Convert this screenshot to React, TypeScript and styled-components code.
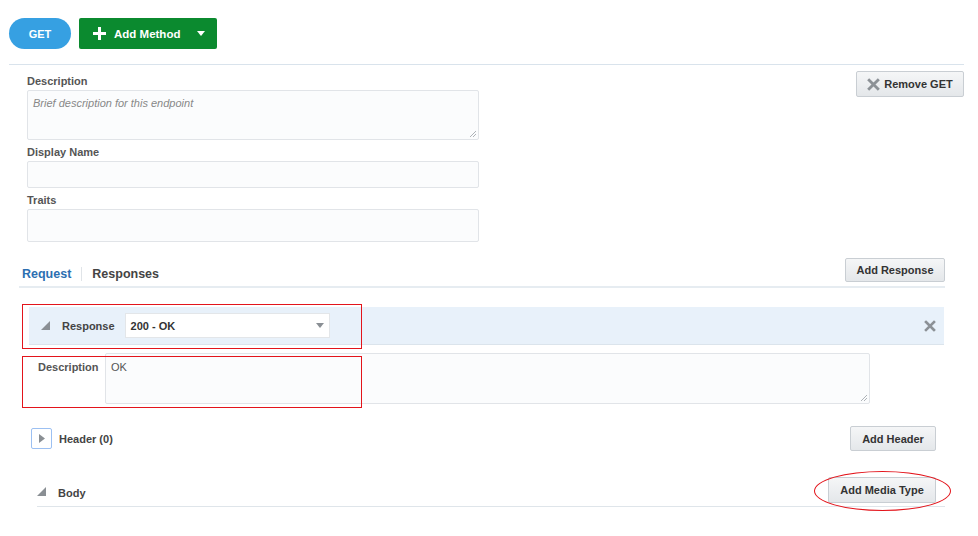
import * as React from 'react';
import styled, { createGlobalStyle, css } from 'styled-components';

const GlobalStyle = createGlobalStyle`
  html, body {
    margin: 0;
    padding: 0;
    background: #ffffff;
    font-family: "Liberation Sans", Arial, sans-serif;
    color: #333333;
  }
`;

const Page = styled.div`
  position: relative;
  width: 978px;
  height: 536px;
  overflow: hidden;
`;

const TopBar = styled.div`
  display: flex;
  gap: 8px;
  padding: 18px 0 0 9px;
`;

const MethodPill = styled.div`
  display: flex;
  align-items: center;
  justify-content: center;
  width: 62px;
  height: 31px;
  border-radius: 16px;
  background: #36a0e2;
  color: #ffffff;
  font-size: 11px;
  font-weight: bold;
`;

const AddMethodButton = styled.div`
  display: flex;
  align-items: center;
  width: 138px;
  height: 31px;
  box-sizing: border-box;
  padding: 0 12px 0 14px;
  background: #0b8a2f;
  border-radius: 2px;
  color: #ffffff;
  font-size: 11.5px;
  font-weight: bold;
  gap: 8px;

  span { flex: 1; }
`;

const Divider = styled.div`
  margin: 15px 14px 0 9px;
  border-top: 1px solid #d9e3ec;
`;

const MethodPanel = styled.div`
  display: flex;
  justify-content: space-between;
  padding: 6px 14px 0 27px;
`;

const FormColumn = styled.div`
  display: flex;
  flex-direction: column;
  width: 452px;
`;

const Label = styled.div<{ $top?: number }>`
  font-size: 11px;
  line-height: 14px;
  font-weight: bold;
  color: #555555;
  margin: ${({ $top }) => $top ?? 3}px 0 2px;
`;

const Field = styled.div<{ $h: number; $placeholder?: boolean }>`
  position: relative;
  height: ${({ $h }) => $h}px;
  box-sizing: border-box;
  border: 1px solid #e1e4e8;
  border-radius: 2px;
  background: #fbfcfd;
  padding: 6px 5px;
  font-size: 11px;
  color: #555;
  ${({ $placeholder }) => $placeholder && css`
    font-style: italic;
    color: #888;
  `}
`;

const Grip = styled.svg`
  position: absolute;
  right: 2px;
  bottom: 2px;
`;

const GrayButton = styled.div<{ $w: number; $h?: number }>`
  display: flex;
  align-items: center;
  justify-content: center;
  gap: 4px;
  width: ${({ $w }) => $w}px;
  height: ${({ $h }) => $h ?? 25}px;
  box-sizing: border-box;
  border: 1px solid #c9ced3;
  border-radius: 2px;
  background: linear-gradient(#f5f6f7, #e4e7ea);
  color: #333;
  font-size: 11px;
  font-weight: bold;
`;

const TabsRow = styled.div`
  display: flex;
  align-items: flex-end;
  justify-content: space-between;
  margin: 16px 33px 0 19px;
  padding-bottom: 4px;
  border-bottom: 2px solid #e6ecf1;
`;

const Tabs = styled.div`
  display: flex;
  align-items: center;
  padding: 0 0 0 3px;
  margin-bottom: 1px;
`;

const Tab = styled.div<{ $active?: boolean }>`
  font-size: 12.5px;
  font-weight: bold;
  color: ${({ $active }) => ($active ? '#2c6fb1' : '#444444')};
  padding-right: 10px;
  & + & {
    border-left: 1px solid #e0e4e8;
    padding-left: 10px;
  }
`;

const ResponseRow = styled.div`
  display: flex;
  align-items: center;
  height: 37px;
  margin: 19px 34px 0 29px;
  padding: 0 8px 0 12px;
  background: #e8f1fa;
  border-bottom: 1px solid #dbe4ec;
`;

const RowTitle = styled.div`
  font-size: 11px;
  font-weight: bold;
  color: #444;
  margin: 0 10px 0 12px;
`;

const Select = styled.div`
  display: flex;
  align-items: center;
  justify-content: space-between;
  width: 205px;
  height: 25px;
  box-sizing: border-box;
  padding: 0 5px;
  background: #ffffff;
  border: 1px solid #e3e6e9;
  font-size: 11px;
  font-weight: bold;
  color: #333;
`;

const Spacer = styled.div`
  flex: 1;
`;

const DescRow = styled.div`
  display: flex;
  margin: 8px 0 0 38px;
`;

const InlineLabel = styled.div`
  width: 67px;
  padding-top: 8px;
  font-size: 11px;
  font-weight: bold;
  color: #555;
`;

const SectionRow = styled.div<{ $line?: boolean }>`
  display: flex;
  align-items: center;
  justify-content: space-between;
  margin: 0 ${({ $line }) => ($line ? 33 : 42)}px 0 ${({ $line }) => ($line ? 37 : 31)}px;
  ${({ $line }) => $line && css`
    border-bottom: 1px solid #dfe5ea;
    padding-bottom: 3px;
  `}
`;

const SectionTitle = styled.div<{ $drop?: number }>`
  display: flex;
  align-items: center;
  gap: 7px;
  margin-top: ${({ $drop }) => $drop ?? 0}px;
  font-size: 11px;
  font-weight: bold;
  color: #444;
`;

const ExpandBox = styled.div`
  display: flex;
  align-items: center;
  justify-content: center;
  width: 21px;
  height: 21px;
  box-sizing: border-box;
  border: 1px solid #9cc0f2;
  border-radius: 2px;
  background: #ffffff;
`;

const Annotation = styled.div<{ $x: number; $y: number; $w: number; $h: number; $round?: boolean }>`
  position: absolute;
  left: ${({ $x }) => $x}px;
  top: ${({ $y }) => $y}px;
  width: ${({ $w }) => $w}px;
  height: ${({ $h }) => $h}px;
  box-sizing: border-box;
  border: 1px solid #e3141b;
  border-radius: ${({ $round }) => ($round ? '50%' : '0')};
  pointer-events: none;
`;

const Corner = () => (
  <svg width="9" height="9" viewBox="0 0 9 9">
    <polygon points="9,0 9,9 0,9" fill="#8a8f94" />
  </svg>
);

const CloseIcon = ({ size, color }: { size: number; color: string }) => (
  <svg width={size} height={size} viewBox="0 0 12 12">
    <path d="M2 2 L10 10 M10 2 L2 10" stroke={color} strokeWidth="2.6" strokeLinecap="square" />
  </svg>
);

const ResizeGrip = () => (
  <Grip width="7" height="7" viewBox="0 0 7 7">
    <path d="M7 1 L1 7 M7 4 L4 7" stroke="#9aa0a6" strokeWidth="0.8" />
  </Grip>
);

export default function App() {
  return (
    <Page>
      <GlobalStyle />
      <TopBar>
        <MethodPill>GET</MethodPill>
        <AddMethodButton>
          <svg width="13" height="13" viewBox="0 0 13 13">
            <path d="M6.5 0 V13 M0 6.5 H13" stroke="#fff" strokeWidth="3" />
          </svg>
          <span>Add Method</span>
          <svg width="8" height="5" viewBox="0 0 8 5">
            <polygon points="0,0 8,0 4,5" fill="#fff" />
          </svg>
        </AddMethodButton>
      </TopBar>
      <Divider />
      <MethodPanel>
        <FormColumn>
          <Label>Description</Label>
          <Field $h={50} $placeholder>
            Brief description for this endpoint
            <ResizeGrip />
          </Field>
          <Label $top={5}>Display Name</Label>
          <Field $h={27} />
          <Label $top={5}>Traits</Label>
          <Field $h={33} />
        </FormColumn>
        <GrayButton $w={108} $h={26}>
          <CloseIcon size={13} color="#8c9196" />
          Remove GET
        </GrayButton>
      </MethodPanel>
      <TabsRow>
        <Tabs>
          <Tab $active>Request</Tab>
          <Tab>Responses</Tab>
        </Tabs>
        <GrayButton $w={100} $h={24}>Add Response</GrayButton>
      </TabsRow>
      <ResponseRow>
        <Corner />
        <RowTitle>Response</RowTitle>
        <Select>
          200 - OK
          <svg width="8" height="5" viewBox="0 0 8 5">
            <polygon points="0,0 8,0 4,5" fill="#8a8f94" />
          </svg>
        </Select>
        <Spacer />
        <CloseIcon size={12} color="#8c9196" />
      </ResponseRow>
      <DescRow>
        <InlineLabel>Description</InlineLabel>
        <Field $h={51} style={{ width: 765, paddingTop: 7 }}>
          OK
          <ResizeGrip />
        </Field>
      </DescRow>
      <SectionRow style={{ marginTop: 22 }}>
        <SectionTitle>
          <ExpandBox>
            <svg width="6" height="9" viewBox="0 0 6 9">
              <polygon points="0,0 6,4.5 0,9" fill="#8a8f94" />
            </svg>
          </ExpandBox>
          Header (0)
        </SectionTitle>
        <GrayButton $w={86} $h={25}>Add Header</GrayButton>
      </SectionRow>
      <SectionRow $line style={{ marginTop: 26 }}>
        <SectionTitle $drop={6}>
          <span style={{ marginTop: -2 }}><Corner /></span>
          <span style={{ marginLeft: 5 }}>Body</span>
        </SectionTitle>
        <GrayButton $w={108} $h={26} style={{ marginRight: 9 }}>Add Media Type</GrayButton>
      </SectionRow>
      <Annotation $x={22} $y={304} $w={340} $h={45} />
      <Annotation $x={22} $y={356} $w={340} $h={52} />
      <Annotation $x={814} $y={471} $w={137} $h={40} $round />
    </Page>
  );
}
